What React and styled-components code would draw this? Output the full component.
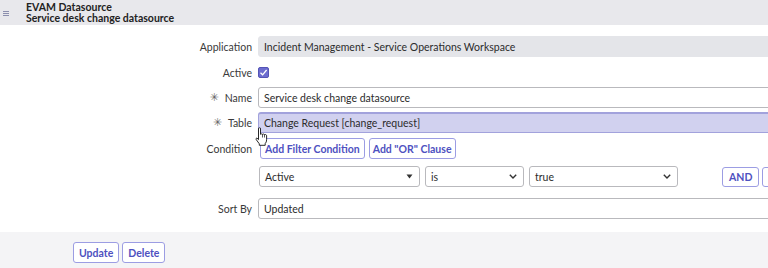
import React from "react";
import styled, { createGlobalStyle, css } from "styled-components";

const Global = createGlobalStyle`
  html, body { margin: 0; padding: 0; background: #ffffff; }
  body { font-family: Lato, "Open Sans", "Liberation Sans", sans-serif; overflow: hidden; }
  * { box-sizing: border-box; }
`;

const Page = styled.div`
  width: 768px;
  height: 268px;
  overflow: hidden;
  display: flex;
  flex-direction: column;
  position: relative;
`;

const Header = styled.header`
  height: 25px;
  background: #e8e8ec;
  display: flex;
  align-items: center;
  padding-left: 3px;
  gap: 17px;
`;

const Burger = styled.span`
  display: flex;
  flex-direction: column;
  gap: 1px;
  width: 6px;
  margin-top: 2px;
  & > i { display: block; height: 1px; background: #8c8fae; }
`;

const Titles = styled.div`
  display: flex;
  flex-direction: column;
  font-size: 10.5px;
  font-weight: 700;
  color: #222;
  line-height: 10.5px;
`;

const Body = styled.main`
  padding: 11px 0 13px;
  background: #fff;
`;

const Form = styled.div`
  display: grid;
  grid-template-columns: 252px 560px;
  column-gap: 6px;
`;

const Label = styled.div`
  grid-column: 1;
  display: flex;
  justify-content: flex-end;
  align-items: center;
  gap: 6px;
  font-size: 10.5px;
  color: #3a3a3a;
  margin-top: ${p => p.$mt || 0}px;
  height: ${p => p.$h || 21}px;
`;

const Req = styled.span`
  font-family: "DejaVu Sans", sans-serif;
  font-size: 11px;
  line-height: 11px;
  color: #666;
`;

const Cell = styled.div`
  grid-column: 2;
  display: flex;
  align-items: center;
  margin-top: ${p => p.$mt || 0}px;
  height: ${p => p.$h || 21}px;
`;

const Field = styled.div`
  width: 100%;
  height: 100%;
  display: flex;
  align-items: center;
  padding-left: 5px;
  font-size: 10.5px;
  color: #2c2c2c;
  border-radius: 3px;
  ${p => p.$variant === "readonly" && css`
    background: #e4e5e9;
    border: 1px solid #e4e5e9;
  `}
  ${p => p.$variant === "plain" && css`
    background: #fff;
    border: 1px solid #b9b9bd;
  `}
  ${p => p.$variant === "focus" && css`
    background: #d1d1ef;
    border: 1px solid #a2a2dc;
    border-top-width: 2px;
  `}
`;

const Check = styled.span`
  width: 11px;
  height: 11px;
  border: 1px solid #5454b6;
  border-radius: 2px;
  background: #6c6ccf;
  display: flex;
  align-items: center;
  justify-content: center;
`;

const Btn = styled.button`
  font-family: Lato, "Open Sans", "Liberation Sans", sans-serif;
  font-size: 10.5px;
  font-weight: 700;
  color: #4e51bf;
  background: #fff;
  border: 1px solid #9c9de3;
  border-radius: 3px;
  height: ${p => p.$h || 21}px;
  padding: 0 ${p => p.$px || 5}px;
  flex-shrink: 0;
  cursor: pointer;
`;

const BtnRow = styled.div`
  display: flex;
  align-items: center;
  gap: ${p => p.$gap || 4}px;
  padding-left: ${p => p.$pl || 0}px;
`;

const Select = styled.div`
  width: ${p => p.$w}px;
  height: 21px;
  flex-shrink: 0;
  border: 1px solid #b9b9bd;
  border-radius: 3px;
  background: #fff;
  display: flex;
  align-items: center;
  justify-content: space-between;
  padding: 0 6px 0 5px;
  font-size: 10.5px;
  color: #2c2c2c;
`;

const Spacer = styled.span`
  width: ${p => p.$w}px;
  flex-shrink: 0;
`;

const Footer = styled.footer`
  flex: 1;
  background: #f4f4f6;
  padding: 10px 0 0 73px;
`;

const Cursor = styled.svg`
  position: absolute;
  left: 255px;
  top: 127px;
`;

const Triangle = () => (
  <svg width="7" height="5" viewBox="0 0 7 5"><path d="M0.5 0.5 H6.5 L3.5 4.5 Z" fill="#333" /></svg>
);
const Chevron = () => (
  <svg width="8" height="5" viewBox="0 0 8 5"><path d="M0.8 0.8 L4 4 L7.2 0.8" fill="none" stroke="#333" strokeWidth="1.4" /></svg>
);

export default function App() {
  return (
    <Page>
      <Global />
      <Header>
        <Burger><i /><i /><i /></Burger>
        <Titles>
          <span>EVAM Datasource</span>
          <span>Service desk change datasource</span>
        </Titles>
      </Header>
      <Body>
        <Form>
          <Label>Application</Label>
          <Cell><Field $variant="readonly">Incident Management - Service Operations Workspace</Field></Cell>

          <Label $mt={5}>Active</Label>
          <Cell $mt={5}>
            <Check>
              <svg width="9" height="9" viewBox="0 0 9 9"><path d="M1.5 4.8 L3.6 6.8 L7.6 2" fill="none" stroke="#fff" strokeWidth="1.3" /></svg>
            </Check>
          </Cell>

          <Label $mt={4}><Req>✳</Req>Name</Label>
          <Cell $mt={4}><Field $variant="plain">Service desk change datasource</Field></Cell>

          <Label $mt={4}><Req>✳</Req>Table</Label>
          <Cell $mt={4}><Field $variant="focus">Change Request [change_request]</Field></Cell>

          <Label $mt={5}>Condition</Label>
          <Cell $mt={5}>
            <BtnRow $gap={4} $pl={2}>
              <Btn $px={4}>Add Filter Condition</Btn>
              <Btn $px={3}>Add "OR" Clause</Btn>
            </BtnRow>
          </Cell>

          <Label $mt={7} />
          <Cell $mt={7}>
            <BtnRow $gap={5} $pl={1}>
              <Select $w={161}>Active<Triangle /></Select>
              <Select $w={99}>is<Chevron /></Select>
              <Select $w={149}>true<Chevron /></Select>
              <Spacer $w={34} />
              <Btn $h={20} $px={6}>AND</Btn>
              <Btn $h={20} $px={6} style={{ marginLeft: -2 }}>OR</Btn>
            </BtnRow>
          </Cell>

          <Label $mt={11}>Sort By</Label>
          <Cell $mt={11}><Field $variant="plain">Updated</Field></Cell>
        </Form>
      </Body>
      <Footer>
        <BtnRow $gap={3}>
          <Btn>Update</Btn>
          <Btn>Delete</Btn>
        </BtnRow>
      </Footer>
      <Cursor width="13" height="19" viewBox="0 0 13 19">
        <path d="M3.5 1.2 Q4.5 0.4 5.5 1.2 V7.3 Q6.5 6.5 7.5 7.3 Q8.5 6.6 9.5 7.6 Q10.6 7.1 11.6 8.3 V12.8 Q11.6 15.2 10.2 16.6 V18.3 H4.3 V16.8 L1.2 12.6 Q0.6 11.4 1.9 11 L3.5 12.6 Z" fill="#fff" stroke="#111" strokeWidth="0.9" strokeLinejoin="round" />
        <path d="M7.5 7.3 V10.5 M9.5 7.6 V10.5" stroke="#111" strokeWidth="0.7" />
      </Cursor>
    </Page>
  );
}
